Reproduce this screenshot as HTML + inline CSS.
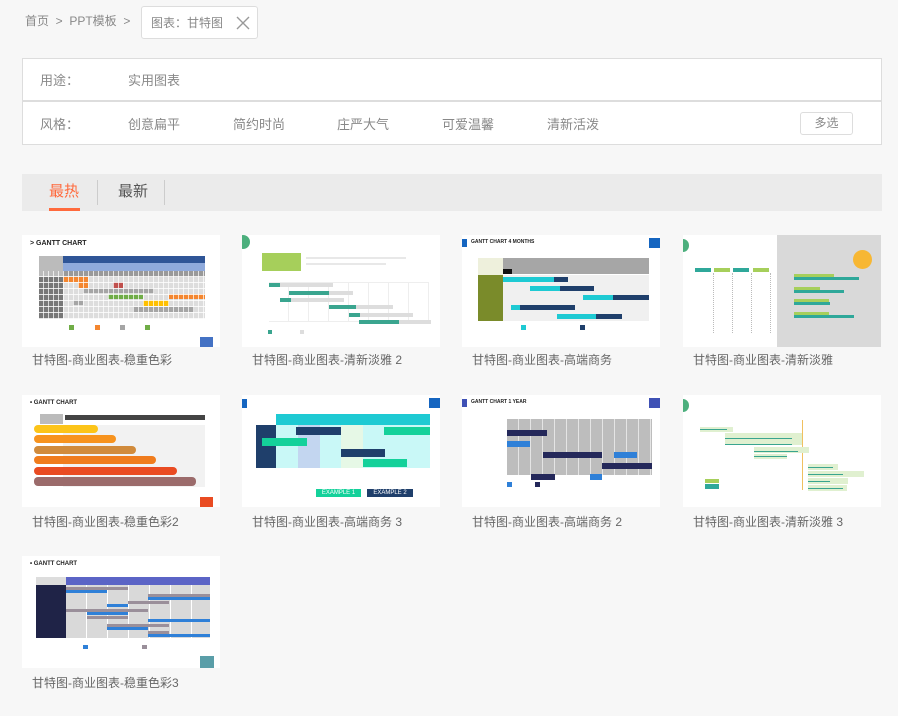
<!DOCTYPE html>
<html><head><meta charset="utf-8"><style>
*{margin:0;padding:0;box-sizing:border-box}
body{width:898px;height:716px;background:#f7f7f7;font-family:"Liberation Sans","Noto Sans CJK SC",sans-serif;position:relative;overflow:hidden;color:#666}
.a{position:absolute}
.t{position:absolute;width:198px;height:112px;background:#fff;overflow:hidden}
.t div{position:absolute}
.cap{position:absolute;font-size:12px;color:#666;white-space:nowrap}
.f{font-size:13px;color:#888}
</style></head><body>
<div class="a" style="left:25px;top:12px;font-size:12px;color:#888">首页 &nbsp;&gt;&nbsp; PPT模板 &nbsp;&gt;</div>
<div class="a" style="left:141px;top:6px;width:117px;height:33px;border:1px solid #ddd;border-radius:3px;background:#fff"></div>
<div class="a" style="left:151px;top:14px;font-size:12px;color:#888">图表：甘特图</div>
<svg class="a" style="left:236px;top:16px" width="14" height="14"><path d="M1 1L13 13M13 1L1 13" stroke="#999" stroke-width="1.4"/></svg>

<div class="a" style="left:22px;top:58px;width:860px;height:87px;background:#fff;border:1px solid #ddd"></div>
<div class="a" style="left:22px;top:100px;width:860px;height:2px;background:#ddd"></div>
<div class="a f" style="left:40px;top:70px">用途：</div>
<div class="a f" style="left:128px;top:70px">实用图表</div>
<div class="a f" style="left:40px;top:114px">风格：</div>
<div class="a f" style="left:128px;top:114px">创意扁平</div>
<div class="a f" style="left:233px;top:114px">简约时尚</div>
<div class="a f" style="left:337px;top:114px">庄严大气</div>
<div class="a f" style="left:442px;top:114px">可爱温馨</div>
<div class="a f" style="left:547px;top:114px">清新活泼</div>
<div class="a" style="left:800px;top:112px;width:53px;height:23px;border:1px solid #ddd;border-radius:3px;font-size:12px;color:#888;text-align:center;line-height:21px">多选</div>

<div class="a" style="left:22px;top:174px;width:860px;height:37px;background:#ebebeb"></div>
<div class="a" style="left:49px;top:180px;font-size:15px;color:#ff6a3d">最热</div>
<div class="a" style="left:49px;top:208px;width:31px;height:3px;background:#ff6a3d"></div>
<div class="a" style="left:97px;top:180px;width:1px;height:25px;background:#ccc"></div>
<div class="a" style="left:118px;top:180px;font-size:15px;color:#555">最新</div>
<div class="a" style="left:164px;top:180px;width:1px;height:25px;background:#ccc"></div>

<!-- thumb1 -->
<div class="t" style="left:22px;top:235px">
<div style="left:8px;top:5px;font-size:7px;font-weight:bold;color:#222">&gt; GANTT CHART</div>
<div style="left:17px;top:21px;width:166px;height:63px;background:#ddd"></div>
<div style="left:17px;top:21px;width:24px;height:21px;background:#bbb"></div>
<div style="left:41px;top:21px;width:142px;height:7px;background:#2f5597"></div>
<div style="left:41px;top:28px;width:142px;height:8px;background:#8faadc"></div>
<div style="left:41px;top:36px;width:142px;height:6px;background:#999"></div>
<div style="left:17px;top:42px;width:24px;height:42px;background:#777"></div>
<div style="left:41px;top:42px;width:25px;height:5px;background:#f4862f"></div>
<div style="left:56px;top:47px;width:10px;height:6px;background:#f4862f"></div>
<div style="left:91px;top:47px;width:10px;height:6px;background:#c0504d"></div>
<div style="left:61px;top:53px;width:71px;height:5px;background:#a5a5a5"></div>
<div style="left:86px;top:59px;width:35px;height:5px;background:#70ad47"></div>
<div style="left:147px;top:59px;width:36px;height:5px;background:#f4862f"></div>
<div style="left:51px;top:65px;width:10px;height:5px;background:#a5a5a5"></div>
<div style="left:121px;top:65px;width:26px;height:6px;background:#ffc000"></div>
<div style="left:111px;top:72px;width:61px;height:5px;background:#a5a5a5"></div>
<div style="left:17px;top:36px;width:166px;height:48px;background:repeating-linear-gradient(90deg,transparent 0 4px,rgba(255,255,255,.7) 4px 5px),repeating-linear-gradient(180deg,transparent 0 5px,rgba(255,255,255,.8) 5px 6px)"></div>
<div style="left:47px;top:90px;width:5px;height:5px;background:#70ad47"></div>
<div style="left:73px;top:90px;width:5px;height:5px;background:#f4862f"></div>
<div style="left:98px;top:90px;width:5px;height:5px;background:#a5a5a5"></div>
<div style="left:123px;top:90px;width:5px;height:5px;background:#70ad47"></div>
<div style="left:178px;top:102px;width:13px;height:10px;background:#4472c4"></div>
</div>
<div class="cap" style="left:32px;top:351px">甘特图-商业图表-稳重色彩</div>

<!-- thumb2 -->
<div class="t" style="left:242px;top:235px">
<div style="left:-6px;top:0px;width:14px;height:14px;border-radius:50%;background:#4caf7d"></div>
<div style="left:20px;top:18px;width:39px;height:18px;background:#a6cf5b"></div>
<div style="left:64px;top:22px;width:100px;height:2px;background:#e8e8e8"></div>
<div style="left:64px;top:28px;width:80px;height:2px;background:#e8e8e8"></div>
<div style="left:27px;top:47px;width:160px;height:40px;border-top:1px solid #eee;border-bottom:1px solid #eee;background:repeating-linear-gradient(90deg,transparent 0 19px,#eee 19px 20px)"></div>
<div style="left:27px;top:48px;width:64px;height:4px;background:#ddd"></div>
<div style="left:27px;top:48px;width:11px;height:4px;background:#3aa58f"></div>
<div style="left:47px;top:56px;width:64px;height:4px;background:#ddd"></div>
<div style="left:47px;top:56px;width:40px;height:4px;background:#3aa58f"></div>
<div style="left:38px;top:63px;width:64px;height:4px;background:#ddd"></div>
<div style="left:38px;top:63px;width:11px;height:4px;background:#3aa58f"></div>
<div style="left:87px;top:70px;width:64px;height:4px;background:#ddd"></div>
<div style="left:87px;top:70px;width:27px;height:4px;background:#3aa58f"></div>
<div style="left:107px;top:78px;width:64px;height:4px;background:#ddd"></div>
<div style="left:107px;top:78px;width:11px;height:4px;background:#3aa58f"></div>
<div style="left:117px;top:85px;width:72px;height:4px;background:#ddd"></div>
<div style="left:117px;top:85px;width:40px;height:4px;background:#3aa58f"></div>
<div style="left:26px;top:95px;width:4px;height:4px;background:#3aa58f"></div>
<div style="left:58px;top:95px;width:4px;height:4px;background:#ddd"></div>
</div>
<div class="cap" style="left:252px;top:351px">甘特图-商业图表-清新淡雅 2</div>

<!-- thumb3 -->
<div class="t" style="left:462px;top:235px">
<div style="left:0;top:4px;width:5px;height:8px;background:#1565c0"></div>
<div style="left:9px;top:4px;font-size:5px;font-weight:bold;color:#222">GANTT CHART 4 MONTHS</div>
<div style="left:187px;top:3px;width:12px;height:10px;background:#1565c0"></div>
<div style="left:16px;top:23px;width:25px;height:17px;background:#eef0dc"></div>
<div style="left:41px;top:23px;width:146px;height:16px;background:#a6a6a6"></div>
<div style="left:41px;top:34px;width:9px;height:5px;background:#111"></div>
<div style="left:16px;top:40px;width:25px;height:46px;background:#7a8b2a"></div>
<div style="left:41px;top:40px;width:146px;height:46px;background:#f0f0f0"></div>
<div style="left:41px;top:42px;width:51px;height:5px;background:#1ecad3"></div>
<div style="left:92px;top:42px;width:14px;height:5px;background:#1f3f6b"></div>
<div style="left:68px;top:51px;width:30px;height:5px;background:#1ecad3"></div>
<div style="left:98px;top:51px;width:34px;height:5px;background:#1f3f6b"></div>
<div style="left:121px;top:60px;width:30px;height:5px;background:#1ecad3"></div>
<div style="left:151px;top:60px;width:36px;height:5px;background:#1f3f6b"></div>
<div style="left:49px;top:70px;width:9px;height:5px;background:#1ecad3"></div>
<div style="left:58px;top:70px;width:55px;height:5px;background:#1f3f6b"></div>
<div style="left:95px;top:79px;width:39px;height:5px;background:#1ecad3"></div>
<div style="left:134px;top:79px;width:26px;height:5px;background:#1f3f6b"></div>
<div style="left:59px;top:90px;width:5px;height:5px;background:#1ecad3"></div>
<div style="left:118px;top:90px;width:5px;height:5px;background:#1f3f6b"></div>
</div>
<div class="cap" style="left:472px;top:351px">甘特图-商业图表-高端商务</div>

<!-- thumb4 -->
<div class="t" style="left:683px;top:235px">
<div style="left:-6px;top:4px;width:12px;height:13px;border-radius:50%;background:#4caf7d"></div>
<div style="left:94px;top:0;width:105px;height:112px;background:#d9d9d9"></div>
<div style="left:12px;top:33px;width:16px;height:4px;background:#2fa89a"></div>
<div style="left:31px;top:33px;width:16px;height:4px;background:#a6cf5b"></div>
<div style="left:50px;top:33px;width:16px;height:4px;background:#2fa89a"></div>
<div style="left:70px;top:33px;width:16px;height:4px;background:#a6cf5b"></div>
<div style="left:30px;top:38px;width:0;height:60px;border-left:1px dotted #bbb"></div>
<div style="left:49px;top:38px;width:0;height:60px;border-left:1px dotted #bbb"></div>
<div style="left:68px;top:38px;width:0;height:60px;border-left:1px dotted #bbb"></div>
<div style="left:87px;top:38px;width:0;height:60px;border-left:1px dotted #bbb"></div>
<div style="left:170px;top:15px;width:19px;height:19px;border-radius:50%;background:#f7b733"></div>
<div style="left:111px;top:39px;width:40px;height:3px;background:#a6cf5b"></div>
<div style="left:111px;top:42px;width:65px;height:3px;background:#2fa89a"></div>
<div style="left:111px;top:52px;width:26px;height:3px;background:#a6cf5b"></div>
<div style="left:111px;top:55px;width:50px;height:3px;background:#2fa89a"></div>
<div style="left:111px;top:64px;width:35px;height:3px;background:#a6cf5b"></div>
<div style="left:111px;top:67px;width:36px;height:3px;background:#2fa89a"></div>
<div style="left:111px;top:77px;width:35px;height:3px;background:#a6cf5b"></div>
<div style="left:111px;top:80px;width:60px;height:3px;background:#2fa89a"></div>
</div>
<div class="cap" style="left:693px;top:351px">甘特图-商业图表-清新淡雅</div>

<!-- thumb5 -->
<div class="t" style="left:22px;top:395px">
<div style="left:8px;top:5px;font-size:6px;font-weight:bold;color:#222">• GANTT CHART</div>
<div style="left:18px;top:19px;width:23px;height:10px;background:#bbb"></div>
<div style="left:43px;top:20px;width:140px;height:5px;background:#444"></div>
<div style="left:41px;top:30px;width:142px;height:62px;background:#f2f2f2"></div>
<div style="left:12px;top:30px;width:64px;height:8px;background:#fcc419;border-radius:4px"></div>
<div style="left:12px;top:40px;width:82px;height:8px;background:#f7931e;border-radius:4px"></div>
<div style="left:12px;top:51px;width:102px;height:8px;background:#d18b3c;border-radius:4px"></div>
<div style="left:12px;top:61px;width:122px;height:8px;background:#f07c1d;border-radius:4px"></div>
<div style="left:12px;top:72px;width:143px;height:8px;background:#e94b22;border-radius:4px"></div>
<div style="left:12px;top:82px;width:162px;height:9px;background:#9b6b6b;border-radius:4px"></div>
<div style="left:178px;top:102px;width:13px;height:10px;background:#e94b22"></div>
</div>
<div class="cap" style="left:32px;top:513px">甘特图-商业图表-稳重色彩2</div>

<!-- thumb6 -->
<div class="t" style="left:242px;top:395px">
<div style="left:0;top:4px;width:5px;height:9px;background:#1565c0"></div>
<div style="left:187px;top:3px;width:12px;height:10px;background:#1565c0"></div>
<div style="left:34px;top:19px;width:154px;height:11px;background:#1ecad3"></div>
<div style="left:14px;top:30px;width:20px;height:43px;background:#1f3f6b"></div>
<div style="left:34px;top:30px;width:154px;height:43px;background:#c9f8f7"></div>
<div style="left:56px;top:30px;width:22px;height:43px;background:#c3d6f0"></div>
<div style="left:99px;top:30px;width:22px;height:43px;background:#e6f8e6"></div>
<div style="left:54px;top:32px;width:45px;height:8px;background:#1f3f6b"></div>
<div style="left:142px;top:32px;width:46px;height:8px;background:#14d19a"></div>
<div style="left:20px;top:43px;width:45px;height:8px;background:#14d19a"></div>
<div style="left:99px;top:54px;width:44px;height:8px;background:#1f3f6b"></div>
<div style="left:121px;top:64px;width:44px;height:8px;background:#14d19a"></div>
<div style="left:142px;top:74px;width:46px;height:0"></div>
<div style="left:74px;top:94px;width:45px;height:8px;background:#14d19a;color:#fff;font-size:6px;line-height:8px;text-align:center">EXAMPLE 1</div>
<div style="left:125px;top:94px;width:46px;height:8px;background:#1f3f6b;color:#fff;font-size:6px;line-height:8px;text-align:center">EXAMPLE 2</div>
</div>
<div class="cap" style="left:252px;top:513px">甘特图-商业图表-高端商务 3</div>

<!-- thumb7 -->
<div class="t" style="left:462px;top:395px">
<div style="left:0;top:4px;width:5px;height:8px;background:#3f51b5"></div>
<div style="left:9px;top:4px;font-size:5px;font-weight:bold;color:#222">GANTT CHART 1 YEAR</div>
<div style="left:187px;top:3px;width:13px;height:10px;background:#3f51b5"></div>
<div style="left:45px;top:24px;width:145px;height:56px;background:#bdbdbd repeating-linear-gradient(90deg,transparent 0 11px,rgba(255,255,255,.6) 11px 12px)"></div>
<div style="left:45px;top:35px;width:40px;height:6px;background:#24285a"></div>
<div style="left:45px;top:46px;width:23px;height:6px;background:#2f80d8"></div>
<div style="left:81px;top:57px;width:59px;height:6px;background:#24285a"></div>
<div style="left:152px;top:57px;width:23px;height:6px;background:#2f80d8"></div>
<div style="left:140px;top:68px;width:50px;height:6px;background:#24285a"></div>
<div style="left:69px;top:79px;width:24px;height:6px;background:#24285a"></div>
<div style="left:128px;top:79px;width:12px;height:6px;background:#2f80d8"></div>
<div style="left:45px;top:87px;width:5px;height:5px;background:#2f80d8"></div>
<div style="left:73px;top:87px;width:5px;height:5px;background:#24285a"></div>
</div>
<div class="cap" style="left:472px;top:513px">甘特图-商业图表-高端商务 2</div>

<!-- thumb8 -->
<div class="t" style="left:683px;top:395px">
<div style="left:-6px;top:4px;width:12px;height:13px;border-radius:50%;background:#4caf7d"></div>
<div style="left:119px;top:25px;width:1px;height:70px;background:#f0c060"></div>
<div style="left:17px;top:32px;width:33px;height:5px;background:#e0f0d0"></div>
<div style="left:42px;top:38px;width:77px;height:7px;background:#e0f0d0"></div>
<div style="left:42px;top:45px;width:77px;height:5px;background:#e0f0d0"></div>
<div style="left:71px;top:52px;width:55px;height:6px;background:#e0f0d0"></div>
<div style="left:71px;top:59px;width:33px;height:5px;background:#e0f0d0"></div>
<div style="left:125px;top:69px;width:30px;height:6px;background:#e0f0d0"></div>
<div style="left:125px;top:76px;width:56px;height:6px;background:#e0f0d0"></div>
<div style="left:125px;top:83px;width:40px;height:6px;background:#e0f0d0"></div>
<div style="left:125px;top:90px;width:39px;height:6px;background:#e0f0d0"></div>
<div style="left:17px;top:34px;width:27px;height:1px;background:#3aa58f"></div>
<div style="left:42px;top:43px;width:67px;height:1px;background:#3aa58f"></div>
<div style="left:42px;top:49px;width:67px;height:1px;background:#3aa58f"></div>
<div style="left:71px;top:56px;width:44px;height:1px;background:#3aa58f"></div>
<div style="left:71px;top:61px;width:33px;height:1px;background:#3aa58f"></div>
<div style="left:125px;top:72px;width:25px;height:1px;background:#3aa58f"></div>
<div style="left:125px;top:79px;width:35px;height:1px;background:#3aa58f"></div>
<div style="left:125px;top:86px;width:22px;height:1px;background:#3aa58f"></div>
<div style="left:125px;top:93px;width:35px;height:1px;background:#3aa58f"></div>
<div style="left:22px;top:84px;width:14px;height:4px;background:#a6cf5b"></div>
<div style="left:22px;top:89px;width:14px;height:5px;background:#2fa89a"></div>
</div>
<div class="cap" style="left:693px;top:513px">甘特图-商业图表-清新淡雅 3</div>

<!-- thumb9 -->
<div class="t" style="left:22px;top:556px">
<div style="left:8px;top:5px;font-size:6px;font-weight:bold;color:#222">• GANTT CHART</div>
<div style="left:14px;top:21px;width:30px;height:8px;background:#ddd"></div>
<div style="left:44px;top:21px;width:144px;height:8px;background:#5b64c6"></div>
<div style="left:14px;top:29px;width:30px;height:53px;background:#1f2347"></div>
<div style="left:44px;top:29px;width:144px;height:53px;background:#d9d9d9 repeating-linear-gradient(90deg,transparent 0 20px,#fff 20px 21px)"></div>
<div style="left:44px;top:31px;width:62px;height:3px;background:#9a8f9a"></div>
<div style="left:44px;top:34px;width:41px;height:3px;background:#2f80d8"></div>
<div style="left:126px;top:38px;width:62px;height:3px;background:#9a8f9a"></div>
<div style="left:126px;top:41px;width:62px;height:3px;background:#2f80d8"></div>
<div style="left:106px;top:45px;width:41px;height:3px;background:#9a8f9a"></div>
<div style="left:85px;top:48px;width:21px;height:3px;background:#2f80d8"></div>
<div style="left:44px;top:53px;width:82px;height:3px;background:#9a8f9a"></div>
<div style="left:65px;top:56px;width:41px;height:3px;background:#2f80d8"></div>
<div style="left:65px;top:60px;width:41px;height:3px;background:#9a8f9a"></div>
<div style="left:126px;top:63px;width:62px;height:3px;background:#2f80d8"></div>
<div style="left:85px;top:68px;width:62px;height:3px;background:#9a8f9a"></div>
<div style="left:85px;top:71px;width:41px;height:3px;background:#2f80d8"></div>
<div style="left:126px;top:75px;width:21px;height:3px;background:#9a8f9a"></div>
<div style="left:126px;top:78px;width:62px;height:3px;background:#2f80d8"></div>
<div style="left:61px;top:89px;width:5px;height:4px;background:#2f80d8"></div>
<div style="left:120px;top:89px;width:5px;height:4px;background:#9a8f9a"></div>
<div style="left:178px;top:100px;width:14px;height:12px;background:#5a9ea8"></div>
</div>
<div class="cap" style="left:32px;top:674px">甘特图-商业图表-稳重色彩3</div>
</body></html>
